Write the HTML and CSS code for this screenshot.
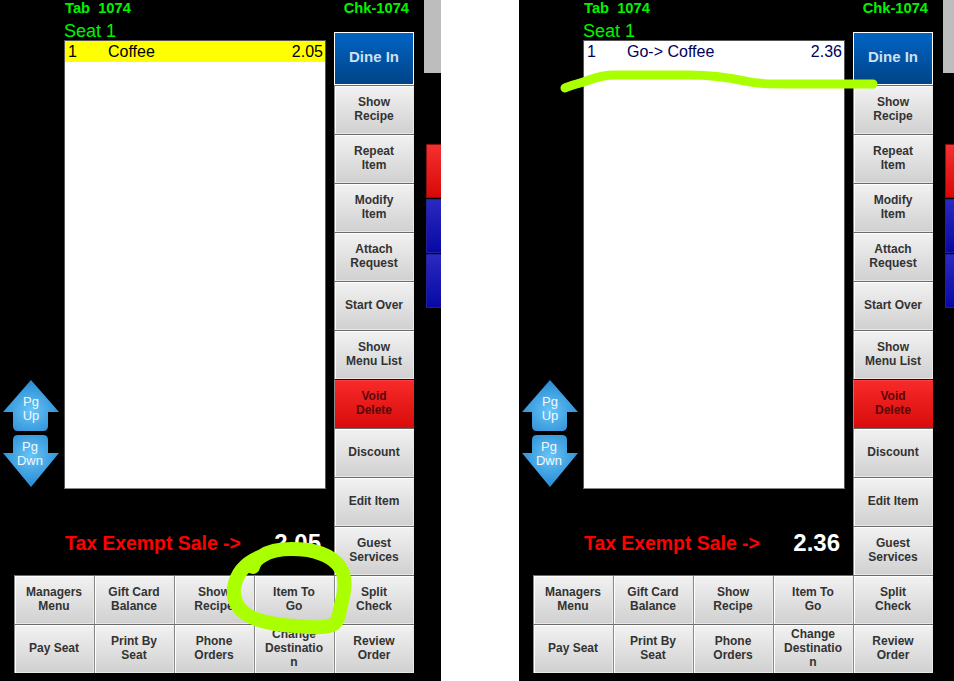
FILE: index.html
```html
<!DOCTYPE html>
<html lang="en">
<head>
<meta charset="utf-8">
<title>POS order screens</title>
<link rel="stylesheet" href="styles.css">
</head>
<body>
<div class="page">
  <section class="panel panel-a">
    <div class="terminal">
      <div class="upper">
        <div class="pager">
          <div class="arrow arrow-up">
            <svg class="arrow-shape" viewBox="0 0 56 52" aria-hidden="true"><defs><radialGradient id="ga" cx="50%" cy="60%" r="55%"><stop offset="0" stop-color="#66c4f6"/><stop offset="1" stop-color="#2c8ed6"/></radialGradient></defs><path d="M28 0 L56 32 H45 V46 Q45 51 40 51 H15 Q10 51 10 46 V32 H0 Z" fill="url(#ga)"/></svg>
            <span class="arrow-label">Pg<br>Up</span>
          </div>
          <div class="arrow arrow-down">
            <svg class="arrow-shape" viewBox="0 0 56 52" aria-hidden="true"><defs><radialGradient id="gb" cx="50%" cy="40%" r="55%"><stop offset="0" stop-color="#66c4f6"/><stop offset="1" stop-color="#2c8ed6"/></radialGradient></defs><path d="M28 52 L56 18 H45 V5 Q45 0 40 0 H15 Q10 0 10 5 V18 H0 Z" fill="url(#gb)"/></svg>
            <span class="arrow-label">Pg<br>Dwn</span>
          </div>
        </div>
        <div class="order">
          <div class="ids"><span>Tab  1074</span><span>Chk-1074</span></div>
          <div class="seat">Seat 1</div>
          <div class="list">
            <div class="line line-selected"><span class="qty">1</span><span class="name">Coffee</span><span class="price">2.05</span></div>
          </div>
          <div class="total"><span class="total-label">Tax Exempt Sale -&gt;</span><span class="total-value">2.05</span></div>
        </div>
        <div class="side">
          <button class="btn btn-blue">Dine In</button>
          <button class="btn">Show<br>Recipe</button>
          <button class="btn">Repeat<br>Item</button>
          <button class="btn">Modify<br>Item</button>
          <button class="btn">Attach<br>Request</button>
          <button class="btn">Start Over</button>
          <button class="btn">Show<br>Menu List</button>
          <button class="btn btn-red">Void<br>Delete</button>
          <button class="btn">Discount</button>
          <button class="btn">Edit Item</button>
          <button class="btn">Guest<br>Services</button>
        </div>
      </div>
      <div class="bottom">
        <button class="btn">Managers<br>Menu</button>
        <button class="btn">Gift Card<br>Balance</button>
        <button class="btn">Show<br>Recipe</button>
        <button class="btn">Item To<br>Go</button>
        <button class="btn">Split<br>Check</button>
        <button class="btn">Pay Seat</button>
        <button class="btn">Print By<br>Seat</button>
        <button class="btn">Phone<br>Orders</button>
        <button class="btn">Change<br>Destinatio<br>n</button>
        <button class="btn">Review<br>Order</button>
      </div>
    </div>
    <div class="edge">
      <div class="edge-gray"></div>
      <div class="edge-red"></div>
      <div class="edge-blue"></div>
      <div class="edge-blue"></div>
    </div>
    <svg class="scribble" viewBox="0 0 441 681" aria-hidden="true"><path class="mark mark-thick" d="M253 567 C254 562 257 559 262 556 C272 549 290 548 308 550 C324 553 338 560 343 573 C346 583 344 595 341 605 C339 613 339 620 335 623 C329 628 318 628 295 626 C276 625 258 622 246 614 C236 607 233 598 234 588 C236 574 244 563 262 556"/></svg>
  </section>

  <section class="panel panel-b">
    <div class="terminal">
      <div class="upper">
        <div class="pager">
          <div class="arrow arrow-up">
            <svg class="arrow-shape" viewBox="0 0 56 52" aria-hidden="true"><path d="M28 0 L56 32 H45 V46 Q45 51 40 51 H15 Q10 51 10 46 V32 H0 Z" fill="url(#ga)"/></svg>
            <span class="arrow-label">Pg<br>Up</span>
          </div>
          <div class="arrow arrow-down">
            <svg class="arrow-shape" viewBox="0 0 56 52" aria-hidden="true"><path d="M28 52 L56 18 H45 V5 Q45 0 40 0 H15 Q10 0 10 5 V18 H0 Z" fill="url(#gb)"/></svg>
            <span class="arrow-label">Pg<br>Dwn</span>
          </div>
        </div>
        <div class="order">
          <div class="ids"><span>Tab  1074</span><span>Chk-1074</span></div>
          <div class="seat">Seat 1</div>
          <div class="list">
            <div class="line line-sent"><span class="qty">1</span><span class="name">Go-&gt; Coffee</span><span class="price">2.36</span></div>
          </div>
          <div class="total"><span class="total-label">Tax Exempt Sale -&gt;</span><span class="total-value">2.36</span></div>
        </div>
        <div class="side">
          <button class="btn btn-blue">Dine In</button>
          <button class="btn">Show<br>Recipe</button>
          <button class="btn">Repeat<br>Item</button>
          <button class="btn">Modify<br>Item</button>
          <button class="btn">Attach<br>Request</button>
          <button class="btn">Start Over</button>
          <button class="btn">Show<br>Menu List</button>
          <button class="btn btn-red">Void<br>Delete</button>
          <button class="btn">Discount</button>
          <button class="btn">Edit Item</button>
          <button class="btn">Guest<br>Services</button>
        </div>
      </div>
      <div class="bottom">
        <button class="btn">Managers<br>Menu</button>
        <button class="btn">Gift Card<br>Balance</button>
        <button class="btn">Show<br>Recipe</button>
        <button class="btn">Item To<br>Go</button>
        <button class="btn">Split<br>Check</button>
        <button class="btn">Pay Seat</button>
        <button class="btn">Print By<br>Seat</button>
        <button class="btn">Phone<br>Orders</button>
        <button class="btn">Change<br>Destinatio<br>n</button>
        <button class="btn">Review<br>Order</button>
      </div>
    </div>
    <div class="edge">
      <div class="edge-gray"></div>
      <div class="edge-red"></div>
      <div class="edge-blue"></div>
      <div class="edge-blue"></div>
    </div>
    <svg class="scribble" viewBox="0 0 441 681" aria-hidden="true"><path class="mark mark-thin" d="M46 88 C52 85 60 84 70 80 C78 77 84 75 96 75 L170 75 C195 75 212 78 226 81 C238 84 250 84 270 84 L354 84"/></svg>
  </section>
</div>
</body>
</html>
```
FILE: styles.css
```css
html, body {
  margin: 0;
  background: #fff;
}
body {
  font-family: "Liberation Sans", Arial, sans-serif;
  overflow: hidden;
}
.page {
  display: flex;
  gap: 78px;
  width: 954px;
  height: 681px;
  overflow: hidden;
}
.panel {
  position: relative;
  flex: 0 0 auto;
  display: flex;
  height: 681px;
  background: #000;
  overflow: hidden;
}
.panel-a { width: 441px; }
.panel-b { width: 435px; }

.terminal {
  flex: 0 0 414px;
  display: flex;
  flex-direction: column;
}
.upper {
  display: flex;
  height: 575px;
}

/* pager arrows */
.pager {
  flex: 0 0 64px;
  box-sizing: border-box;
  padding: 380px 0 0 3px;
  display: flex;
  flex-direction: column;
  gap: 3px;
}
.arrow {
  position: relative;
  width: 56px;
  height: 52px;
  color: #f2f8ff;
  font-size: 13px;
  line-height: 14px;
  text-align: center;
}
.arrow-shape {
  position: absolute;
  inset: 0;
  width: 56px;
  height: 52px;
}
.arrow-label {
  position: relative;
  display: block;
}
.arrow-up .arrow-label { padding-top: 15px; }
.arrow-down .arrow-label { padding-top: 5px; margin-left: -2px; }

/* order column */
.order {
  flex: 0 0 262px;
  min-width: 0;
  display: flex;
  flex-direction: column;
}
.ids {
  display: flex;
  justify-content: space-between;
  box-sizing: border-box;
  width: 346px;
  height: 17px;
  padding: 0 1px 0 1px;
  color: #00f400;
  font-size: 14.7px;
  font-weight: 700;
  line-height: 17px;
  white-space: pre;
}
.seat {
  height: 23px;
  color: #00f400;
  font-size: 18px;
  line-height: 28px;
}
.list {
  box-sizing: border-box;
  height: 449px;
  background: #fff;
  border: 1px solid #555;
  border-bottom-color: #888;
}
.line {
  display: flex;
  height: 21px;
  padding: 0 2px 0 3px;
  font-size: 16px;
  line-height: 21px;
}
.line-selected { background: #ff0; color: #000; }
.line-sent { color: #000058; }
.qty { flex: 0 0 40px; }
.name { flex: 1; }
.total {
  display: flex;
  justify-content: space-between;
  align-items: center;
  height: 30px;
  margin-top: 39px;
  padding: 0 5px 0 1px;
  font-weight: 700;
}
.total-label {
  color: #f00;
  font-size: 19.4px;
}
.total-value {
  color: #fff;
  font-size: 24px;
}

/* buttons */
.btn {
  display: block;
  box-sizing: border-box;
  width: 80px;
  height: 49px;
  margin: 0;
  padding: 0 1px 3px 0;
  border: 0;
  border-top: 1px solid #6a6a6a;
  border-left: 1px solid #8a8a8a;
  background: linear-gradient(#f2f2f2, #d0d0d0);
  box-shadow: inset 1px 1px 0 #fff, inset -1px -1px 0 #e8e8e8;
  color: #333;
  font-family: "Liberation Sans", Arial, sans-serif;
  font-size: 12px;
  font-weight: 700;
  line-height: 14px;
  text-align: center;
  overflow: hidden;
}
.btn-blue {
  height: 53px;
  padding: 0 0 4px;
  border: 1px solid #fff;
  background: linear-gradient(#0064c4, #004488);
  box-shadow: none;
  color: #d0e0f0;
  font-size: 15px;
}
.btn-red {
  border-top-color: #400;
  background: linear-gradient(#f82a2a, #d80c0c);
  box-shadow: inset 0 1px 0 #ff4040;
  color: #5a0808;
}
.side {
  flex: 0 0 80px;
  padding-top: 32px;
  margin-left: 8px;
}
.bottom {
  display: grid;
  grid-template-columns: repeat(5, 80px);
  grid-auto-rows: 49px;
  margin-left: 14px;
}

/* right edge: next window peeking in */
.edge {
  flex: 1;
  margin-left: 10px;
}
.edge-gray {
  height: 73px;
  background: #bdbdbd;
  margin-bottom: 71px;
}
.edge-red, .edge-blue {
  height: 54px;
  margin-left: 2px;
  margin-bottom: 1px;
  box-sizing: border-box;
  border: 1px solid #8a1010;
  border-right: 0;
}
.edge-red {
  background: linear-gradient(#f53030, #d80808);
}
.edge-blue {
  border-color: #20209a;
  background: linear-gradient(#2a2ac0, #0808a4);
}

/* hand-drawn highlighter marks */
.scribble {
  position: absolute;
  left: 0;
  top: 0;
  width: 441px;
  height: 681px;
  overflow: visible;
  pointer-events: none;
}
.mark {
  fill: none;
  stroke: #aaff00;
  stroke-linecap: round;
  stroke-linejoin: round;
}
.mark-thick { stroke-width: 14; }
.mark-thin { stroke-width: 9; }
```
